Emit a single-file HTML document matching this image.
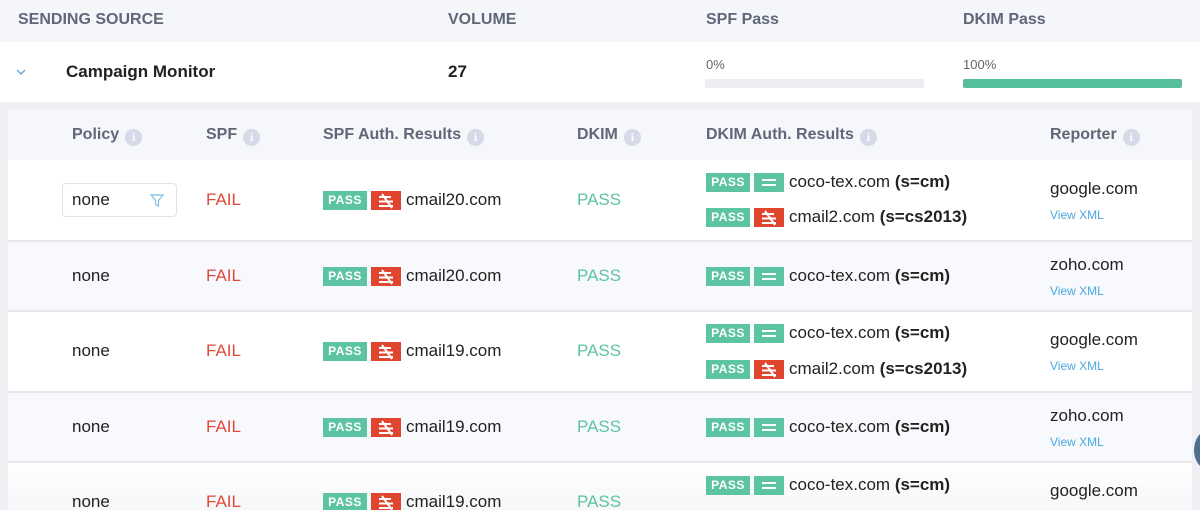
<!DOCTYPE html>
<html><head><meta charset="utf-8"><style>
*{box-sizing:border-box;margin:0;padding:0}
html,body{width:1200px;height:510px;overflow:hidden}
body{background:#eef0f4;font-family:"Liberation Sans",sans-serif;position:relative;color:#222}
.abs{position:absolute;white-space:nowrap}
.top{position:absolute;left:0;top:0;width:1200px;height:42px;background:#f5f6f9}
.th{color:#5f6778;font-size:16px;font-weight:bold;top:11px}
.row1{position:absolute;left:0;top:42px;width:1200px;height:60px;background:#fff}
.panel{position:absolute;left:8px;top:110px;width:1184px;height:400px;background:#fff}
.ph{position:absolute;left:0;top:0;width:1184px;height:50px;background:#f6f7fa}
.h2{color:#5f6778;font-size:16px;font-weight:bold;top:16px}
.i{display:inline-block;width:17px;height:17px;border-radius:50%;background:#d5d9e8;color:#fff;font-size:12px;text-align:center;line-height:17px;vertical-align:-2px;margin-left:6px;font-family:"Liberation Serif",serif;font-weight:bold}
.r{position:absolute;left:0;width:1184px;border-top:2px solid #e6e8ee}
.alt{background:#f8f9fc}
.v{font-size:17px;color:#222}
.fail{color:#e0493a;font-size:17px}
.pass{color:#5cc3a3;font-size:17px}
.ln{display:flex;align-items:center;height:20px;font-size:17px}
.bp{display:block;width:44px;height:19px;background:#5cc3a3;color:#fff;font-size:12px;font-weight:bold;text-align:center;line-height:19px;letter-spacing:.5px}
.bx{display:block;width:30px;height:19px;margin-left:4px;margin-right:5px}
.xml{color:#4aa8e0;font-size:12px}
</style></head><body>
<div class="top"></div>
<div class="abs th" style="left:18px">SENDING SOURCE</div>
<div class="abs th" style="left:448px">VOLUME</div>
<div class="abs th" style="left:706px">SPF Pass</div>
<div class="abs th" style="left:963px">DKIM Pass</div>
<div class="row1"></div>
<svg class="abs" style="left:16px;top:69px" width="10" height="7" viewBox="0 0 10 7"><path d="M1 1L5 5L9 1" stroke="#5aa7db" stroke-width="1.3" fill="none"/></svg>
<div class="abs" style="left:66px;top:62px;font-size:17px;font-weight:bold;color:#222">Campaign Monitor</div>
<div class="abs" style="left:448px;top:62px;font-size:17px;font-weight:bold">27</div>
<div class="abs" style="left:706px;top:57px;font-size:13px;color:#666">0%</div>
<div class="abs" style="left:705px;top:79px;width:219px;height:9px;background:#eceef4;border-radius:2px"></div>
<div class="abs" style="left:963px;top:57px;font-size:13px;color:#666">100%</div>
<div class="abs" style="left:963px;top:79px;width:219px;height:9px;background:#55be9c;border-radius:2px"></div>

<div class="panel">
<div class="ph"></div>
<div class="abs h2" style="left:64px">Policy<span class="i">i</span></div>
<div class="abs h2" style="left:198px">SPF<span class="i">i</span></div>
<div class="abs h2" style="left:315px">SPF Auth. Results<span class="i">i</span></div>
<div class="abs h2" style="left:569px">DKIM<span class="i">i</span></div>
<div class="abs h2" style="left:698px">DKIM Auth. Results<span class="i">i</span></div>
<div class="abs h2" style="left:1042px">Reporter<span class="i">i</span></div>
<div class="r" style="top:130px;height:70px"></div>
<div class="r alt" style="top:130px;height:70px"></div>
<div class="r" style="top:200px;height:82px"></div>
<div class="r alt" style="top:281px;height:70px"></div>
<div class="r" style="top:351px;height:60px;background:linear-gradient(#fff,#f4f5f7)"></div>
</div>

<svg width="0" height="0" style="position:absolute"><defs>
<symbol id="ne" viewBox="0 0 30 19"><rect width="30" height="19" fill="#e0452f"/><path d="M8 6H20M8 10.5H22M8 15H22M11 3L21 17" stroke="#fff" stroke-width="2" fill="none"/></symbol>
<symbol id="eq" viewBox="0 0 30 19"><rect width="30" height="19" fill="#5cc3a3"/><path d="M8 7H22M8 12H22" stroke="#fff" stroke-width="2" fill="none"/></symbol>
</defs></svg>

<!-- row 1 -->
<div class="abs" style="left:62px;top:183px;width:115px;height:34px;border:1px solid #dfe2e8;border-radius:4px;background:#fff"></div>
<div class="abs v" style="left:72px;top:190px">none</div>
<svg class="abs" style="left:150px;top:194px" width="14" height="13" viewBox="0 0 14 13"><path d="M1 1H13L8.5 6.5V12L5.5 10.5V6.5Z" fill="none" stroke="#7fc0e8" stroke-width="1.2"/></svg>
<div class="abs fail" style="left:206px;top:190px">FAIL</div>
<div class="abs ln" style="left:323px;top:190px"><span class="bp">PASS</span><svg class="bx" width="30" height="19"><use href="#ne"/></svg>cmail20.com</div>
<div class="abs pass" style="left:577px;top:190px">PASS</div>
<div class="abs ln" style="left:706px;top:172px"><span class="bp">PASS</span><svg class="bx" width="30" height="19"><use href="#eq"/></svg>coco-tex.com&nbsp;<b>(s=cm)</b></div>
<div class="abs ln" style="left:706px;top:207px"><span class="bp">PASS</span><svg class="bx" width="30" height="19"><use href="#ne"/></svg>cmail2.com&nbsp;<b>(s=cs2013)</b></div>
<div class="abs v" style="left:1050px;top:179px">google.com</div>
<div class="abs xml" style="left:1050px;top:208px">View XML</div>

<!-- row 2 -->
<div class="abs v" style="left:72px;top:266px">none</div>
<div class="abs fail" style="left:206px;top:266px">FAIL</div>
<div class="abs ln" style="left:323px;top:266px"><span class="bp">PASS</span><svg class="bx" width="30" height="19"><use href="#ne"/></svg>cmail20.com</div>
<div class="abs pass" style="left:577px;top:266px">PASS</div>
<div class="abs ln" style="left:706px;top:266px"><span class="bp">PASS</span><svg class="bx" width="30" height="19"><use href="#eq"/></svg>coco-tex.com&nbsp;<b>(s=cm)</b></div>
<div class="abs v" style="left:1050px;top:255px">zoho.com</div>
<div class="abs xml" style="left:1050px;top:284px">View XML</div>

<!-- row 3 -->
<div class="abs v" style="left:72px;top:341px">none</div>
<div class="abs fail" style="left:206px;top:341px">FAIL</div>
<div class="abs ln" style="left:323px;top:341px"><span class="bp">PASS</span><svg class="bx" width="30" height="19"><use href="#ne"/></svg>cmail19.com</div>
<div class="abs pass" style="left:577px;top:341px">PASS</div>
<div class="abs ln" style="left:706px;top:323px"><span class="bp">PASS</span><svg class="bx" width="30" height="19"><use href="#eq"/></svg>coco-tex.com&nbsp;<b>(s=cm)</b></div>
<div class="abs ln" style="left:706px;top:359px"><span class="bp">PASS</span><svg class="bx" width="30" height="19"><use href="#ne"/></svg>cmail2.com&nbsp;<b>(s=cs2013)</b></div>
<div class="abs v" style="left:1050px;top:330px">google.com</div>
<div class="abs xml" style="left:1050px;top:359px">View XML</div>

<!-- row 4 -->
<div class="abs v" style="left:72px;top:417px">none</div>
<div class="abs fail" style="left:206px;top:417px">FAIL</div>
<div class="abs ln" style="left:323px;top:417px"><span class="bp">PASS</span><svg class="bx" width="30" height="19"><use href="#ne"/></svg>cmail19.com</div>
<div class="abs pass" style="left:577px;top:417px">PASS</div>
<div class="abs ln" style="left:706px;top:417px"><span class="bp">PASS</span><svg class="bx" width="30" height="19"><use href="#eq"/></svg>coco-tex.com&nbsp;<b>(s=cm)</b></div>
<div class="abs v" style="left:1050px;top:406px">zoho.com</div>
<div class="abs xml" style="left:1050px;top:435px">View XML</div>

<!-- row 5 -->
<div class="abs v" style="left:72px;top:492px">none</div>
<div class="abs fail" style="left:206px;top:492px">FAIL</div>
<div class="abs ln" style="left:323px;top:492px"><span class="bp">PASS</span><svg class="bx" width="30" height="19"><use href="#ne"/></svg>cmail19.com</div>
<div class="abs pass" style="left:577px;top:492px">PASS</div>
<div class="abs ln" style="left:706px;top:475px"><span class="bp">PASS</span><svg class="bx" width="30" height="19"><use href="#eq"/></svg>coco-tex.com&nbsp;<b>(s=cm)</b></div>
<div class="abs v" style="left:1050px;top:481px">google.com</div>

<div class="abs" style="left:1194px;top:430px;width:30px;height:40px;border-radius:50%;background:#4f6f8f"></div>
</body></html>
